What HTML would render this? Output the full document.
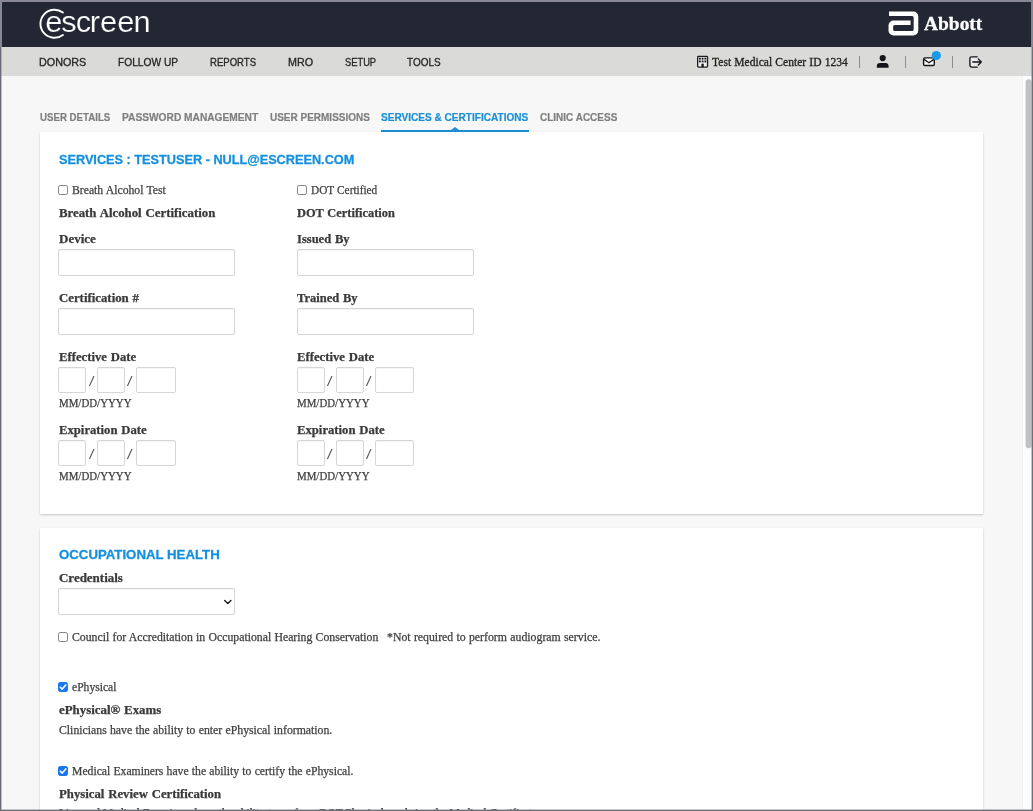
<!DOCTYPE html>
<html lang="en">
<head>
<meta charset="utf-8">
<title>eScreen - Services &amp; Certifications</title>
<style>
*{box-sizing:border-box;margin:0;padding:0}
html,body{width:1033px;height:811px;overflow:hidden;background:#f7f7f7}
body{position:relative;font-family:"Liberation Serif",serif;font-size:12px;color:#3c3c3c}
/* fitted text */
.t{position:absolute;display:block;white-space:nowrap;line-height:16px;transform-origin:0 50%;text-decoration:none;list-style:none}
.nav{font-family:"Liberation Sans",sans-serif;font-weight:normal;font-size:10.2px;color:#262626}
.tab{font-family:"Liberation Sans",sans-serif;font-weight:bold;font-size:10.6px;color:#7f7f7f}
.tabon{font-family:"Liberation Sans",sans-serif;font-weight:bold;font-size:10.6px;color:#1a8fd6}
.h2{font-family:"Liberation Sans",sans-serif;font-weight:bold;font-size:13.5px;color:#1490de}
.r{font-family:"Liberation Serif",serif;font-weight:normal;font-size:11.6px;color:#404040;word-spacing:0.3px}
.b{font-family:"Liberation Serif",serif;font-weight:bold;font-size:11.5px;color:#3a3a3a;word-spacing:0.6px}
.site{font-family:"Liberation Serif",serif;font-weight:normal;font-size:12.2px;color:#222222;word-spacing:0.3px}
.abb{font-family:"Liberation Serif",serif;font-weight:bold;font-size:18px;color:#ffffff}
.sl{font-family:"Liberation Serif",serif;font-weight:normal;font-size:15.3px;color:#4a4a4a}
.r{-webkit-text-stroke:.25px currentColor}
.site{-webkit-text-stroke:.3px currentColor}
.sl{-webkit-text-stroke:.12px currentColor}
.b{-webkit-text-stroke:.25px currentColor}
.tab,.tabon{-webkit-text-stroke:.2px currentColor}
.h2{-webkit-text-stroke:.3px currentColor}
.nav{-webkit-text-stroke:.3px currentColor}
.abb{-webkit-text-stroke:.3px currentColor}
.page{position:absolute;left:0;top:0;width:1033px;height:811px;overflow:hidden;will-change:transform}
/* window frame */
.frame{position:absolute;left:0;top:0;width:1033px;height:811px;pointer-events:none;z-index:50}
.frame i{position:absolute;display:block;background:#878894}
/* header */
header{position:absolute;left:0;top:0;width:1033px;height:47px;background:#222733}
.logo{position:absolute;left:36px;top:2px}
.abbott{position:absolute;left:888px;top:11px}
/* nav */
nav{position:absolute;left:0;top:47px;width:1033px;height:29px;background:#dadad8}
nav ul{list-style:none}
.sep{position:absolute;top:9px;width:1px;height:12px;background:#8c8c8c}
.ico{position:absolute}
/* scrollbar */
.sb-track{position:absolute;left:1022px;top:76px;width:11px;height:735px;background:#fcfcfc;border-left:1px solid #f0f0f0}
.sb-thumb{position:absolute;left:1025px;top:79px;width:6px;height:369px;border-radius:3px;background:#c1c1c1;transform:translate(.6px,.3px)}
/* tabs */
.tabs{position:absolute;left:0;top:76px;width:1018px;height:57px}
.tabs .ul{position:absolute;left:381px;top:54px;width:147.5px;height:2px;background:#1a8fd6}
.tabs .ar{position:absolute;left:451px;top:50.5px;width:0;height:0;border-left:4px solid transparent;border-right:4px solid transparent;border-bottom:3.5px solid #1a8fd6}
/* cards */
.card{position:absolute;left:40px;width:942.7px;background:#fff;box-shadow:0 1px 2px rgba(0,0,0,.2)}
input.f,select.f{position:absolute;display:block;border:1px solid #d6d6d6;border-radius:2px;background:#fff;height:26.5px;outline:0;box-shadow:inset 0 1px 1px rgba(0,0,0,.04);font:12px "Liberation Serif",serif;-webkit-appearance:none;appearance:none}
input.cb{position:absolute;-webkit-appearance:none;appearance:none;width:10.5px;height:10px;border:1px solid #858585;border-radius:2.2px;background:#fff}
input.cb:checked{border-color:#1876f2;background:#1876f2}
.ck{position:absolute;pointer-events:none}
.chev{position:absolute;pointer-events:none}
</style>
</head>
<body>
<div class="page">
<header>
  <svg class="logo" width="116" height="44" viewBox="0 0 116 44" role="img" aria-label="escreen">
    <path d="M26.9 10.6A14 14 0 1 0 26.9 32.9" fill="none" stroke="#fff" stroke-width="1.9" stroke-linecap="round"/>
    <text transform="scale(1.07,1)" x="8.75 23.71 37.19 50.24 59.82 75.94 91.13" y="29.9" font-family="Liberation Sans, sans-serif" font-size="28.8" fill="#fff" stroke="#222733" stroke-width="0.2">escreen</text>
  </svg>
  <svg class="abbott" width="30.8" height="25" viewBox="0 0 30 25" preserveAspectRatio="none" aria-hidden="true">
    <path d="M1 0.5H24.5A5 5 0 0 1 29.5 5.5V19.5A5 5 0 0 1 24.5 24.5H5.5A5 5 0 0 1 0.5 19.5V14.5A5 5 0 0 1 5.5 9.5H22V14H6.5A1.6 1.6 0 0 0 5 15.6V18.4A1.6 1.6 0 0 0 6.5 20H23.5A1.6 1.6 0 0 0 25 18.4V6.6A1.6 1.6 0 0 0 23.5 5H1Z" fill="#fff"/>
  </svg>
  <span class="t abb" style="left:924.0px;top:15.7px;transform:scaleX(1.0793)">Abbott</span>
</header>
<nav>
  <ul>
  <li class="t nav" style="left:38.9px;top:7.6px;transform:scaleX(1.0577)">DONORS</li>
  <li class="t nav" style="left:117.8px;top:7.6px;transform:scaleX(1.0031)">FOLLOW UP</li>
  <li class="t nav" style="left:210.0px;top:7.6px;transform:scaleX(0.9376)">REPORTS</li>
  <li class="t nav" style="left:287.9px;top:7.6px;transform:scaleX(1.0555)">MRO</li>
  <li class="t nav" style="left:344.6px;top:7.6px;transform:scaleX(0.9155)">SETUP</li>
  <li class="t nav" style="left:407.2px;top:7.6px;transform:scaleX(0.9779)">TOOLS</li>
  </ul>
  <svg class="ico" style="left:696px;top:8px" width="14" height="14" viewBox="0 0 14 14" aria-hidden="true">
    <rect x="1.65" y="1.35" width="9.9" height="10.8" rx="0.8" fill="#f1f1f0" stroke="#1b1c22" stroke-width="1.3"/>
    <g fill="#1b1c22"><rect x="2.9" y="2.7" width="1.9" height="1.9"/><rect x="5.65" y="2.7" width="1.9" height="1.9"/><rect x="8.4" y="2.7" width="1.9" height="1.9"/><rect x="2.9" y="5.5" width="1.9" height="1.9"/><rect x="5.65" y="5.5" width="1.9" height="1.9"/><rect x="8.4" y="5.5" width="1.9" height="1.9"/><rect x="5.4" y="8.7" width="2.4" height="3.4"/></g>
  </svg>
  <span class="t site" style="left:712.2px;top:7.2px;transform:scaleX(0.9485)">Test Medical Center ID 1234</span>
  <span class="sep" style="left:859px"></span>
  <svg class="ico" style="left:876px;top:7px" width="14" height="14" viewBox="0 0 14 14" aria-hidden="true">
    <circle cx="6.7" cy="4.1" r="3.1" fill="#14151b"/>
    <path d="M0.8 13.8V12.3A3.3 3.3 0 0 1 4.1 9H9.3A3.3 3.3 0 0 1 12.6 12.3V13.8Z" fill="#14151b"/>
  </svg>
  <span class="sep" style="left:905px"></span>
  <svg class="ico" style="left:921px;top:3px" width="22" height="18" viewBox="0 0 22 18" aria-hidden="true">
    <rect x="2.6" y="7.9" width="10.7" height="7.6" rx="1.3" fill="#fdfdfd" stroke="#14151b" stroke-width="1.4"/>
    <path d="M3.1 9.4L7.95 12.7L12.8 9.4" fill="none" stroke="#14151b" stroke-width="1.3"/>
    <circle cx="15.3" cy="5.5" r="4.6" fill="#189ae6"/>
  </svg>
  <span class="sep" style="left:952px"></span>
  <svg class="ico" style="left:968px;top:8px" width="15" height="14" viewBox="0 0 15 14" aria-hidden="true">
    <path d="M9.2 1.8H3.7A1.8 1.8 0 0 0 1.9 3.6V10.3A1.8 1.8 0 0 0 3.7 12.1H9.2" fill="#ececeb" stroke="#14151b" stroke-width="1.35" stroke-linecap="round"/>
    <path d="M4.8 6.95H12.6M10.3 3.9L13.3 6.95L10.3 10" fill="none" stroke="#14151b" stroke-width="1.35" stroke-linecap="round" stroke-linejoin="round"/>
  </svg>
</nav>

<div class="tabs">
  <a class="t tab" style="left:40.2px;top:33.0px;transform:scaleX(0.9139)">USER DETAILS</a>
  <a class="t tab" style="left:122.4px;top:33.0px;transform:scaleX(0.9616)">PASSWORD MANAGEMENT</a>
  <a class="t tab" style="left:269.9px;top:33.0px;transform:scaleX(0.9427)">USER PERMISSIONS</a>
  <a class="t tabon" style="left:381.1px;top:33.0px;transform:scaleX(0.9502)">SERVICES &amp; CERTIFICATIONS</a>
  <a class="t tab" style="left:539.7px;top:33.0px;transform:scaleX(0.9425)">CLINIC ACCESS</a>
  <span class="ar"></span><span class="ul"></span>
</div>

<section class="card" style="top:132px;height:382px">
  <h2 class="t h2" style="left:18.7px;top:19.7px;transform:scaleX(0.9413)">SERVICES : TESTUSER - NULL@ESCREEN.COM</h2>
  <label class="t r" style="left:32.0px;top:50.6px;transform:scaleX(1.0091)">Breath Alcohol Test</label>
  <label class="t r" style="left:270.6px;top:50.6px;transform:scaleX(0.9731)">DOT Certified</label>
  <h3 class="t b" style="left:18.7px;top:72.9px;transform:scaleX(1.1144)">Breath Alcohol Certification</h3>
  <h3 class="t b" style="left:257.4px;top:72.9px;transform:scaleX(1.0773)">DOT Certification</h3>
  <label class="t b" style="left:18.7px;top:99.3px;transform:scaleX(1.1296)">Device</label>
  <label class="t b" style="left:257.4px;top:99.3px;transform:scaleX(1.0909)">Issued By</label>
  <label class="t b" style="left:18.7px;top:158.2px;transform:scaleX(1.1140)">Certification #</label>
  <label class="t b" style="left:257.4px;top:158.2px;transform:scaleX(1.0885)">Trained By</label>
  <label class="t b" style="left:18.7px;top:217.0px;transform:scaleX(1.1032)">Effective Date</label>
  <label class="t b" style="left:257.4px;top:217.0px;transform:scaleX(1.1032)">Effective Date</label>
  <span class="t sl" style="left:48.7px;top:241.0px;transform:scaleX(1.2706)">/</span>
  <span class="t sl" style="left:87.4px;top:241.0px;transform:scaleX(1.2706)">/</span>
  <span class="t sl" style="left:287.4px;top:241.0px;transform:scaleX(1.2706)">/</span>
  <span class="t sl" style="left:326.1px;top:241.0px;transform:scaleX(1.2706)">/</span>
  <span class="t r" style="left:18.7px;top:264.0px;transform:scaleX(0.9392)">MM/DD/YYYY</span>
  <span class="t r" style="left:257.4px;top:264.0px;transform:scaleX(0.9392)">MM/DD/YYYY</span>
  <label class="t b" style="left:18.7px;top:289.8px;transform:scaleX(1.1031)">Expiration Date</label>
  <label class="t b" style="left:257.4px;top:289.8px;transform:scaleX(1.1031)">Expiration Date</label>
  <span class="t sl" style="left:48.7px;top:314.0px;transform:scaleX(1.2706)">/</span>
  <span class="t sl" style="left:87.4px;top:314.0px;transform:scaleX(1.2706)">/</span>
  <span class="t sl" style="left:287.4px;top:314.0px;transform:scaleX(1.2706)">/</span>
  <span class="t sl" style="left:326.1px;top:314.0px;transform:scaleX(1.2706)">/</span>
  <span class="t r" style="left:18.7px;top:336.6px;transform:scaleX(0.9392)">MM/DD/YYYY</span>
  <span class="t r" style="left:257.4px;top:336.6px;transform:scaleX(0.9392)">MM/DD/YYYY</span>
  <input type="checkbox" class="cb" style="left:18.3px;top:53.0px;width:10px;height:10px">
  <input type="checkbox" class="cb" style="left:257.0px;top:53.0px;width:10px;height:10px">
  <input type="text" class="f" style="left:18.0px;top:117.2px;width:177px;height:27px">
  <input type="text" class="f" style="left:256.8px;top:117.2px;width:177px;height:27px">
  <input type="text" class="f" style="left:18.0px;top:176.2px;width:177px;height:27px">
  <input type="text" class="f" style="left:256.8px;top:176.2px;width:177px;height:27px">
  <input type="text" class="f" style="left:18.2px;top:235.0px;width:28px;height:26px">
  <input type="text" class="f" style="left:57.0px;top:235.0px;width:28px;height:26px">
  <input type="text" class="f" style="left:96.0px;top:235.0px;width:39.5px;height:26px">
  <input type="text" class="f" style="left:256.9px;top:235.0px;width:28px;height:26px">
  <input type="text" class="f" style="left:295.7px;top:235.0px;width:28px;height:26px">
  <input type="text" class="f" style="left:334.7px;top:235.0px;width:39.5px;height:26px">
  <input type="text" class="f" style="left:18.2px;top:308.0px;width:28px;height:26px">
  <input type="text" class="f" style="left:57.0px;top:308.0px;width:28px;height:26px">
  <input type="text" class="f" style="left:96.0px;top:308.0px;width:39.5px;height:26px">
  <input type="text" class="f" style="left:256.9px;top:308.0px;width:28px;height:26px">
  <input type="text" class="f" style="left:295.7px;top:308.0px;width:28px;height:26px">
  <input type="text" class="f" style="left:334.7px;top:308.0px;width:39.5px;height:26px">
</section>

<section class="card" style="top:528px;height:300px">
  <h2 class="t h2" style="left:18.7px;top:19.3px;transform:scaleX(0.9799)">OCCUPATIONAL HEALTH</h2>
  <label class="t b" style="left:18.7px;top:41.6px;transform:scaleX(1.1279)">Credentials</label>
  <label class="t r" style="left:31.7px;top:102.4px;transform:scaleX(1.0147)">Council for Accreditation in Occupational Hearing Conservation</label>
  <span class="t r" style="left:347.2px;top:102.4px;transform:scaleX(1.0188)">*Not required to perform audiogram service.</span>
  <label class="t r" style="left:31.8px;top:151.8px;transform:scaleX(0.9992)">ePhysical</label>
  <h3 class="t b" style="left:18.7px;top:173.9px;transform:scaleX(1.1205)">ePhysical® Exams</h3>
  <p class="t r" style="left:18.7px;top:194.7px;transform:scaleX(1.0147)">Clinicians have the ability to enter ePhysical information.</p>
  <label class="t r" style="left:31.6px;top:236.0px;transform:scaleX(1.0065)">Medical Examiners have the ability to certify the ePhysical.</label>
  <h3 class="t b" style="left:18.7px;top:257.5px;transform:scaleX(1.1087)">Physical Review Certification</h3>
  <p class="t r" style="left:18.7px;top:277.7px;transform:scaleX(0.9749)">Licensed Medical Examiners have the ability to perform DOT Physicals and sign the Medical Certificate.</p>
  <select class="f" style="left:18px;top:59.8px;width:177px;height:27px"><option></option></select>
  <svg class="chev" style="left:183px;top:70px" width="10" height="8" viewBox="0 0 10 8" aria-hidden="true"><path d="M1.7 2.4L4.8 5.4L7.9 2.4" fill="none" stroke="#1c1c1c" stroke-width="1.4" stroke-linecap="round" stroke-linejoin="round"/></svg>
  <input type="checkbox" class="cb" style="left:18.3px;top:104.0px;width:10px;height:10px">
  <input type="checkbox" class="cb" checked style="left:18.3px;top:154.0px;width:10px;height:10px"><svg class="ck" style="left:18.3px;top:154.0px" width="10" height="10" viewBox="0 0 10 10" aria-hidden="true"><path d="M2.3 5.2L4.2 7.1L7.8 2.9" fill="none" stroke="#fff" stroke-width="1.6" stroke-linecap="round" stroke-linejoin="round"/></svg>
  <input type="checkbox" class="cb" checked style="left:18.3px;top:238.0px;width:10px;height:10px"><svg class="ck" style="left:18.3px;top:238.0px" width="10" height="10" viewBox="0 0 10 10" aria-hidden="true"><path d="M2.3 5.2L4.2 7.1L7.8 2.9" fill="none" stroke="#fff" stroke-width="1.6" stroke-linecap="round" stroke-linejoin="round"/></svg>
</section>

<div class="sb-track"></div>
<div class="sb-thumb"></div>
<div class="frame"><i style="left:0;top:0;width:1033px;height:2px"></i><i style="left:0;top:0;width:2px;height:47px"></i><i style="left:1031px;top:0;width:2px;height:47px"></i><i style="left:0;top:47px;width:2px;height:764px;background:linear-gradient(90deg,#6b6a7a 0 50%,rgba(107,106,122,.4) 50%)"></i><i style="left:1031px;top:47px;width:2px;height:764px;background:linear-gradient(90deg,rgba(110,110,124,.4) 0 50%,#6e6e7c 50%)"></i><i style="left:0;top:809px;width:1033px;height:2px;background:linear-gradient(180deg,rgba(110,110,124,.4) 0 50%,#6e6e7c 50%)"></i></div>
</div>
</body>
</html>
